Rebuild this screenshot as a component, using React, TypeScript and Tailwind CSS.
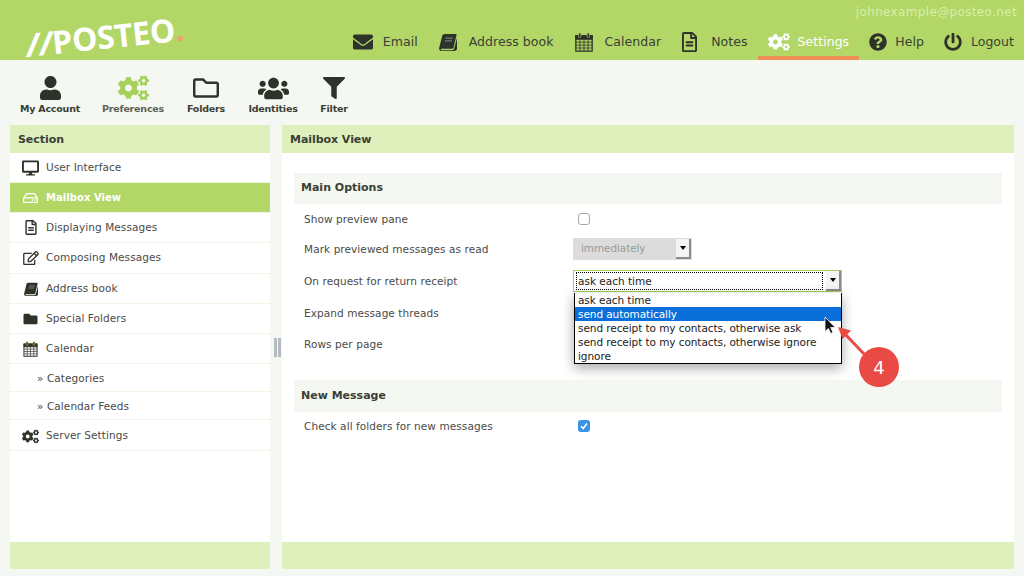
import type { ReactNode } from "react";
import {
  FaEnvelope, FaRegFileAlt, FaCogs, FaQuestionCircle, FaPowerOff, FaUser, FaRegFolder,
  FaUsers, FaFilter, FaDesktop, FaRegHdd, FaRegEdit, FaFolder,
} from "react-icons/fa";

function BookIcon({ className }: { className?: string }) {
  return (
    <svg viewBox="0 0 20 20" className={className} fill="currentColor">
      <path d="M6 1h12.5c.8 0 1.2.6 1 1.3L16.2 16c-.3 1.1-1 1.6-2 1.6H3.2c-.9 0-1.3.5-1 1 .1.3.5.5 1 .5h11.6c1 0 1.7-.5 2-1.5L20 5.6v12.2c-.5 1.3-1.6 2.2-3 2.2H3c-2 0-3.3-1.8-2.8-3.6L3.6 3C4 1.8 4.9 1 6 1z" />
      <path d="M7.5 5h8l-.4 1.4h-8zM6.7 8h8l-.4 1.4h-8z" fill="#fff" fillOpacity="0.35" />
    </svg>
  );
}

function CalendarIcon({ className }: { className?: string }) {
  return (
    <svg viewBox="0 0 20 22" className={className} fill="none" stroke="currentColor">
      <path d="M1 4h18v17H1z" strokeWidth="1.4" />
      <path d="M1 4h18v4H1z" fill="currentColor" strokeWidth="1" />
      <path d="M1 11.2h18M1 14.4h18M1 17.6h18M5.5 8v13M10 8v13M14.5 8v13" strokeWidth="0.9" />
      <rect x="4" y="1" width="2.6" height="5" rx="1.3" fill="currentColor" stroke="#b2d766" strokeWidth="0.7" />
      <rect x="13.4" y="1" width="2.6" height="5" rx="1.3" fill="currentColor" stroke="#b2d766" strokeWidth="0.7" />
    </svg>
  );
}

function NavItem({ icon, label, gap, active }: { icon: ReactNode; label: string; gap: string; active?: boolean }) {
  return (
    <div className={`flex h-[36px] items-center border-b-4 px-[10px] pt-[4px] text-[12.5px] tracking-[0.05px] ${gap} ${active ? "border-[#ee8f58] text-white" : "border-transparent text-[#3a4034]"}`}>
      {icon}
      <span>{label}</span>
    </div>
  );
}

function ToolItem({ icon, label, width, active }: { icon: ReactNode; label: string; width: string; active?: boolean }) {
  return (
    <div className={`flex flex-col items-center ${width}`}>
      <div className="flex h-[28px] items-center justify-center">{icon}</div>
      <span className={`text-[9.5px] font-bold leading-[13px] tracking-[-0.2px] ${active ? "text-[#5c6155]" : "text-[#3a3f35]"}`}>{label}</span>
    </div>
  );
}

function SideRow({ icon, label, height, active, sub }: { icon?: ReactNode; label: string; height: string; active?: boolean; sub?: boolean }) {
  if (sub) {
    return (
      <div className={`flex items-center border-b border-[#f2f4e6] pl-[27px] pt-[3px] text-[10.5px] tracking-[0.08px] text-[#4a4a48] ${height}`}>
        » {label}
      </div>
    );
  }
  return (
    <div className={`flex items-center border-b border-[#f2f4e6] ${height} ${active ? "bg-[#b2d766] text-[10px] font-bold tracking-[0.05px] text-white" : "text-[10.5px] tracking-[0.08px] text-[#4a4a48]"}`}>
      <span className={`flex w-[36px] justify-center pl-[5px] ${active ? "text-white" : "text-[#2e332a]"}`}>{icon}</span>
      <span>{label}</span>
    </div>
  );
}

function SelectButton() {
  return (
    <div className="flex h-[20px] w-[15px] items-center justify-center border-r-2 border-b-2 border-[#8c8c8c] bg-[#f4f4f4]">
      <div className="h-0 w-0 border-x-[3px] border-t-[4px] border-x-transparent border-t-black" />
    </div>
  );
}

function FormRow({ label, height, children }: { label: string; height: string; children?: ReactNode }) {
  return (
    <div className={`flex items-center ${height}`}>
      <span className="w-[279px] pl-[10px] pt-[2px] text-[10.5px] tracking-[0.08px] text-[#4a4a48]">{label}</span>
      {children}
    </div>
  );
}

const options = [
  "ask each time",
  "send automatically",
  "send receipt to my contacts, otherwise ask",
  "send receipt to my contacts, otherwise ignore",
  "ignore",
];

export default function App() {
  return (
    <div className="relative flex h-[576px] w-[1024px] flex-col overflow-hidden bg-[#f5f7f2] font-['DejaVu_Sans',sans-serif]">
      {/* Top bar */}
      <header className="flex h-[60px] justify-between overflow-hidden bg-[#b2d766]">
        <div className="ml-[26px] mt-[23px] h-[44px] origin-left -rotate-[6deg] font-['Open_Sans',sans-serif] text-[32px] font-bold leading-[44px] tracking-[-0.3px] text-white">
          <span className="italic">//</span>POSTEO<span className="text-[#f0a070]">.</span>
        </div>
        <div className="flex flex-col items-end justify-between">
          <div className="pr-[7px] pt-[3px] text-[12px] leading-[18px] tracking-[0.35px] text-[#d9edaa]">johnexample@posteo.net</div>
          <nav className="flex">
            <NavItem gap="gap-[10px]" label="Email" icon={<FaEnvelope className="h-[20px] w-[20px] text-[#2e332a]" />} />
            <NavItem gap="gap-[11px]" label="Address book" icon={<BookIcon className="h-[18px] w-[20px] text-[#2e332a]" />} />
            <NavItem gap="gap-[11px]" label="Calendar" icon={<CalendarIcon className="h-[20px] w-[20px] text-[#2e332a]" />} />
            <NavItem gap="gap-[13px]" label="Notes" icon={<FaRegFileAlt className="h-[20px] w-[17px] text-[#2e332a]" />} />
            <NavItem gap="gap-[8px]" label="Settings" active icon={<FaCogs className="h-[20px] w-[22px] text-white" />} />
            <NavItem gap="gap-[8px]" label="Help" icon={<FaQuestionCircle className="h-[18px] w-[18px] text-[#2e332a]" />} />
            <NavItem gap="gap-[9px]" label="Logout" icon={<FaPowerOff className="h-[18px] w-[18px] text-[#2e332a]" />} />
          </nav>
        </div>
      </header>

      {/* Toolbar */}
      <div className="flex h-[65px] pl-[10px] pt-[14px]">
        <ToolItem width="w-[80px]" label="My Account" icon={<FaUser className="h-[24px] w-[23px] text-[#2e332a]" />} />
        <ToolItem width="w-[86px]" label="Preferences" active icon={<FaCogs className="h-[26px] w-[31px] text-[#a5d05c]" />} />
        <ToolItem width="w-[60px]" label="Folders" icon={<FaRegFolder className="h-[26px] w-[26px] text-[#2e332a]" />} />
        <ToolItem width="w-[74px]" label="Identities" icon={<FaUsers className="h-[27px] w-[31px] text-[#2e332a]" />} />
        <ToolItem width="w-[48px]" label="Filter" icon={<FaFilter className="h-[22px] w-[22px] text-[#2e332a]" />} />
      </div>

      {/* Panels */}
      <div className="flex flex-1 px-[10px] pb-[7px]">
        <aside className="flex w-[260px] flex-col bg-white">
          <div className="flex h-[28px] items-center bg-[#dff0bd] pl-[8px] pt-[2px] text-[11px] font-bold tracking-[-0.05px] text-[#3a3f35]">Section</div>
          <SideRow height="h-[30px]" label="User Interface" icon={<FaDesktop className="h-[16px] w-[17px]" />} />
          <SideRow height="h-[30px]" label="Mailbox View" active icon={<FaRegHdd className="h-[14px] w-[15px]" />} />
          <SideRow height="h-[30px]" label="Displaying Messages" icon={<FaRegFileAlt className="h-[15px] w-[14px]" />} />
          <SideRow height="h-[31px]" label="Composing Messages" icon={<FaRegEdit className="h-[14px] w-[16px]" />} />
          <SideRow height="h-[30px]" label="Address book" icon={<BookIcon className="h-[14px] w-[14px]" />} />
          <SideRow height="h-[30px]" label="Special Folders" icon={<FaFolder className="h-[14px] w-[15px]" />} />
          <SideRow height="h-[30px]" label="Calendar" icon={<CalendarIcon className="h-[16px] w-[15px]" />} />
          <SideRow height="h-[28px]" label="Categories" sub />
          <SideRow height="h-[28px]" label="Calendar Feeds" sub />
          <SideRow height="h-[31px] pt-[2px]" label="Server Settings" icon={<FaCogs className="h-[15px] w-[17px]" />} />
          <div className="flex-1" />
          <div className="h-[27px] bg-[#dff0bd]" />
        </aside>

        <div className="flex w-[12px] items-center pl-[4px]">
          <div className="flex h-[19px] gap-[1px]">
            <div className="w-[3px] bg-[#b4bcc2]" />
            <div className="w-[3px] bg-[#b4bcc2]" />
          </div>
        </div>

        <main className="flex flex-1 flex-col bg-white">
          <div className="flex h-[28px] items-center bg-[#dff0bd] pl-[8px] pt-[2px] text-[11px] font-bold tracking-[-0.05px] text-[#3a3f35]">Mailbox View</div>
          <div className="flex-1 px-[12px] pt-[20px]">
            <div className="flex h-[31px] items-center bg-[#f5f7f2] pl-[7px] text-[11px] font-bold text-[#3a3f35]">Main Options</div>
            <FormRow label="Show preview pane" height="h-[30px]">
              <div className="ml-[5px] h-[12px] w-[12px] rounded-[3px] border border-[#a8a8a8] bg-white" />
            </FormRow>
            <FormRow label="Mark previewed messages as read" height="h-[30px]">
              <div className="flex h-[22px] w-[119px] items-center justify-between bg-[#dcdcdc] pl-[8px] pr-[1px] text-[10.5px] tracking-[-0.1px] text-[#9a9a9a]">
                immediately
                <SelectButton />
              </div>
            </FormRow>
            <FormRow label="On request for return receipt" height="h-[34px]">
              <div className="relative flex h-[22px] w-[269px] items-center border border-[#a8d060] bg-white pl-[2px] text-[10.5px] text-[#222]">
                <span className="flex h-[18px] w-[247px] items-center border border-dotted border-black pl-[1px] pt-[1px]">ask each time</span>
                <div className="ml-auto"><SelectButton /></div>
                <div className="absolute left-[0px] top-[22px] z-10 w-[268px] border-x border-b border-black bg-white text-[10.5px] tracking-[-0.07px] shadow-[0_4px_12px_rgba(0,0,0,0.35)]">
                  {options.map((o, i) => (
                    <div key={o} className={`flex h-[14px] items-center pl-[3px] pt-[2px] ${i === 1 ? "bg-[#0a6fd8] text-white" : "text-[#222]"}`}>{o}</div>
                  ))}
                </div>
              </div>
            </FormRow>
            <FormRow label="Expand message threads" height="h-[30px]" />
            <FormRow label="Rows per page" height="h-[32px]" />
            <div className="mt-[20px] flex h-[32px] items-center bg-[#f5f7f2] pl-[7px] text-[11px] font-bold text-[#3a3f35]">New Message</div>
            <FormRow label="Check all folders for new messages" height="h-[28px]">
              <div className="ml-[5px] flex h-[12px] w-[12px] items-center justify-center rounded-[3px] bg-[#3b93e8]">
                <svg viewBox="0 0 12 12" className="h-[10px] w-[10px]" fill="none" stroke="white" strokeWidth="2"><path d="M2.5 6.5l2.5 2.5 4.5-6" /></svg>
              </div>
            </FormRow>
          </div>
          <div className="h-[27px] bg-[#dff0bd]" />
        </main>
      </div>

      {/* Annotation over the dropdown */}
      <svg viewBox="0 0 1024 576" className="pointer-events-none absolute left-0 top-0 z-20 h-[576px] w-[1024px]">
        <path d="M825 317v14.5l3.4-3 2.4 5 2.2-1-2.3-5h4.6z" fill="#111" stroke="#fff" strokeWidth="0.8" />
        <path d="M864 354L845 334" stroke="#e94a44" strokeWidth="3" />
        <path d="M838 327l13 3.5-8.5 8.5z" fill="#e94a44" />
      </svg>
      <div className="absolute left-[859px] top-[347px] z-20 flex h-[40px] w-[40px] items-center justify-center rounded-full bg-[#e94a44] text-[18px] text-white">4</div>
    </div>
  );
}
